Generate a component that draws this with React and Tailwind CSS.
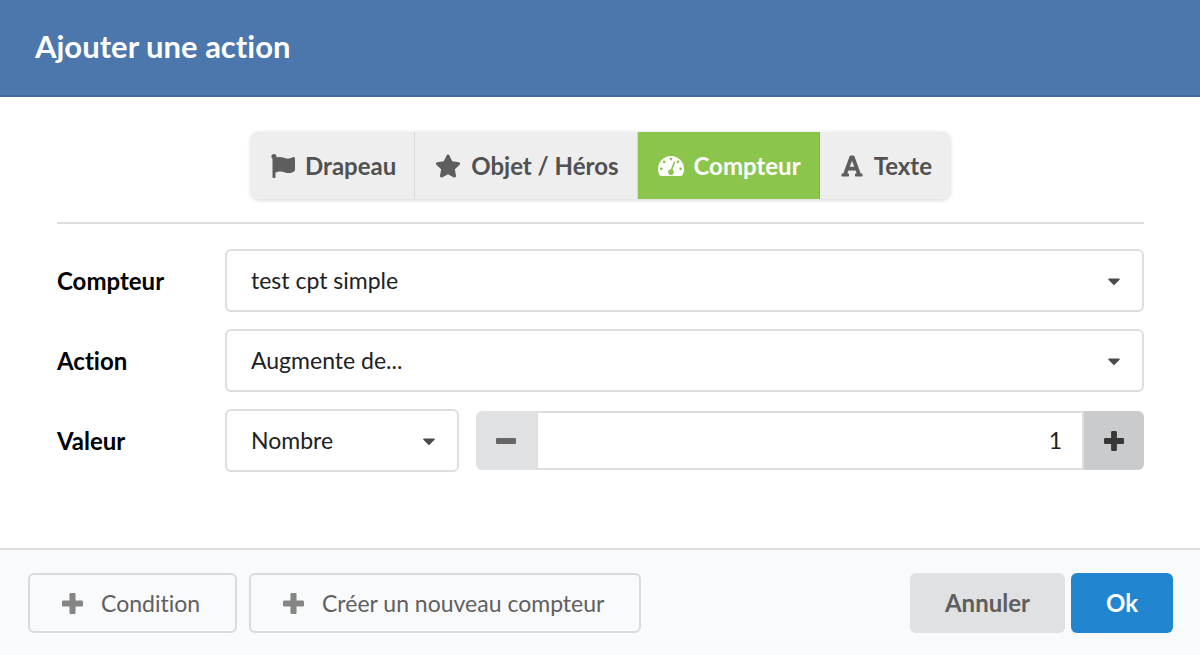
import { useState } from 'react';
import { FaFlag, FaStar, FaFont, FaCaretDown } from 'react-icons/fa';

function GaugeIcon({ className }) {
  return (
    <svg viewBox="0 -3 27 27" fill="currentColor" className={className} aria-hidden="true">
      <path
        fillRule="evenodd"
        d="M13.5 0A13.5 13.5 0 0 0 0 13.5c0 2.4.6 4.700 1.800 6.700.3.500.800.800 1.400.800h20.600c.600 0 1.100-.300 1.400-.800 1.200-2 1.800-4.300 1.800-6.700A13.500 13.500 0 0 0 13.500 0z
          M13.500 1.900a1.400 1.400 0 1 1 0 2.800 1.400 1.400 0 0 1 0-2.800z
          M6.400 4.900a1.400 1.400 0 1 1 0 2.800 1.400 1.400 0 0 1 0-2.800z
          M20.700 4.900a1.400 1.400 0 1 1 0 2.800 1.400 1.400 0 0 1 0-2.800z
          M3.400 12a1.400 1.400 0 1 1 0 2.800 1.400 1.400 0 0 1 0-2.800z
          M23.600 12a1.400 1.400 0 1 1 0 2.800 1.400 1.400 0 0 1 0-2.800z
          M17.700 7.100l-2.600 7.300a3 3 0 1 1-1.700-.500l2.700-7.400a.85.85 0 0 1 1.600.6z"
      />
    </svg>
  );
}

function PlusIcon({ className }) {
  return (
    <svg viewBox="0 0 20 20" fill="currentColor" className={className} aria-hidden="true">
      <rect x="0" y="7.1" width="20" height="5.8" rx="1.2" />
      <rect x="7.1" y="0" width="5.8" height="20" rx="1.2" />
    </svg>
  );
}

function MinusIcon({ className }) {
  return (
    <svg viewBox="0 0 20 20" fill="currentColor" className={className} aria-hidden="true">
      <rect x="0" y="7.1" width="20" height="5.8" rx="1.2" />
    </svg>
  );
}

const tabs = [
  { id: 'flag', label: 'Drapeau', Icon: FaFlag, size: 'size-6' },
  { id: 'item', label: 'Objet / Héros', Icon: FaStar, size: 'size-[26px]' },
  { id: 'counter', label: 'Compteur', Icon: GaugeIcon, size: 'size-[26px]' },
  { id: 'text', label: 'Texte', Icon: FaFont, size: 'size-6' },
];

function Dropdown({ id, label, options, className = 'w-full' }) {
  return (
    <div className={`relative ${className}`}>
      <select
        id={id}
        aria-label={label}
        className="block w-full h-[63px] appearance-none rounded-md border-2 border-[#dededf] bg-white pl-6 pr-14 text-[23px] text-[#212121]"
      >
        {options.map((option) => (
          <option key={option}>{option}</option>
        ))}
      </select>
      <FaCaretDown className="pointer-events-none absolute right-5 top-1/2 -translate-y-1/2 text-xl text-[#4a4a4a]" />
    </div>
  );
}

function Field({ id, label, children }) {
  return (
    <div className="flex items-center">
      <label htmlFor={id} className="w-42 shrink-0 font-bold text-black">
        {label}
      </label>
      <div className="flex flex-1 items-center gap-[17px]">{children}</div>
    </div>
  );
}

export default function App() {
  const [active, setActive] = useState('counter');
  const [value, setValue] = useState(1);

  return (
    <div className="flex min-h-screen flex-col bg-white font-[Lato,sans-serif] text-2xl [font-variant-ligatures:none]">
      <header className="border-b-2 border-[#426a9f] bg-[#4c77ad] px-[35px] pt-7 pb-[31px]">
        <h1 className="text-[31px] leading-9 font-bold text-white">Ajouter une action</h1>
      </header>

      <main className="flex-1 pt-[35px] pr-14 pl-[57px]">
        <div className="flex justify-center">
          <div className="flex overflow-hidden rounded-lg bg-[#eeeeee] shadow-[0_1px_4px_rgba(34,36,38,0.2)]">
            {tabs.map(({ id, label, Icon, size }) => (
              <button
                key={id}
                type="button"
                onClick={() => setActive(id)}
                className={`flex h-[67px] items-center gap-2.5 border-r pr-4.5 pl-5 font-bold last:border-r-0 ${
                  active === id ? 'border-[#7db343] bg-[#8bc54b] text-white' : 'border-[#d8d8d8] text-[#515151]'
                }`}
              >
                <Icon className={`${size} ${active === id ? '' : 'text-[#5e5e5e]'}`} />
                {label}
              </button>
            ))}
          </div>
        </div>

        <hr className="mt-[23px] border-t-2 border-[#dededf]" />

        <form className="mt-[25px] flex flex-col gap-[17px]">
          <Field id="counter" label="Compteur">
            <Dropdown id="counter" options={['test cpt simple']} />
          </Field>
          <Field id="action" label="Action">
            <Dropdown id="action" options={['Augmente de...']} />
          </Field>
          <Field id="value" label="Valeur">
            <Dropdown label="Type de valeur" options={['Nombre']} className="w-[234px] shrink-0" />
            <div className="flex h-[59px] flex-1 overflow-hidden rounded-md">
              <button
                type="button"
                aria-label="Diminuer"
                onClick={() => setValue(value - 1)}
                className="flex w-15 shrink-0 items-center justify-center bg-[#e0e1e2] text-[#666666]"
              >
                <MinusIcon className="size-5" />
              </button>
              <input
                id="value"
                type="text"
                value={value}
                onChange={(e) => setValue(Number(e.target.value) || 0)}
                className="min-w-0 flex-1 border-2 border-[#dededf] px-5 text-right text-[23px] text-[#212121]"
              />
              <button
                type="button"
                aria-label="Augmenter"
                onClick={() => setValue(value + 1)}
                className="flex w-15 shrink-0 items-center justify-center bg-[#cacbcd] text-[#383838]"
              >
                <PlusIcon className="size-5" />
              </button>
            </div>
          </Field>
        </form>
      </main>

      <footer className="flex items-center border-t-2 border-[#dedede] bg-[#f9fafb] pt-[23px] pr-[27px] pb-[22px] pl-7">
        <div className="flex gap-3 text-[23px] text-[#606060]">
          <button type="button" className="flex h-15 items-center gap-[18px] rounded-md border-2 border-[#dadbdc] pr-[35px] pl-8">
            <PlusIcon className="size-[21px] text-[#858585]" />
            Condition
          </button>
          <button type="button" className="flex h-15 items-center gap-[18px] rounded-md border-2 border-[#dadbdc] pr-[35px] pl-8">
            <PlusIcon className="size-[21px] text-[#858585]" />
            Créer un nouveau compteur
          </button>
        </div>
        <div className="ml-auto flex gap-1.5 font-bold">
          <button type="button" className="h-15 rounded-md bg-[#e0e1e2] px-[35px] text-[#5e5e5e]">
            Annuler
          </button>
          <button type="button" className="h-15 rounded-md bg-[#2185d0] px-[35px] text-white">
            Ok
          </button>
        </div>
      </footer>
    </div>
  );
}
